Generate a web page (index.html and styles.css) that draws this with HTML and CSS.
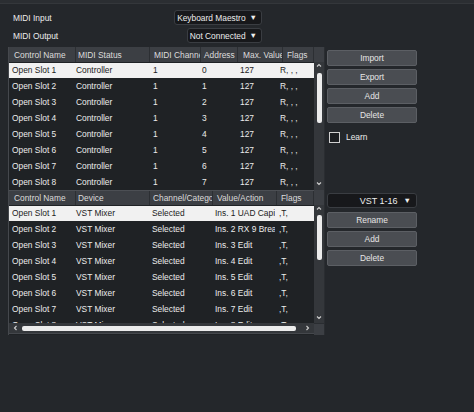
FILE: index.html
```html
<html>
	<head>
		<title>Generic Remote</title>
		<meta name="viewport" content="width=device-width, initial-scale=1.0">
		<link rel="stylesheet" href="styles.css">
	</head>
	<body>
		<div class="topbar"></div>
		<div class="io">
			<div class="io-row">
				<span>MIDI Input</span>
				<div class="select sel-input">Keyboard Maestro <span class="caret">▼</span></div>
			</div>
			<div class="io-row">
				<span>MIDI Output</span>
				<div class="select sel-output">Not Connected <span class="caret">▼</span></div>
			</div>
		</div>

		<div class="section">
			<div class="frame">
				<div class="list">
					<div class="thead t1">
						<div>Control Name</div><div>MIDI Status</div><div>MIDI Channel</div><div>Address</div><div>Max. Value</div><div>Flags</div>
					</div>
					<div class="tbody">
						<div class="row t1 selected"><div>Open Slot 1</div><div>Controller</div><div>1</div><div>0</div><div>127</div><div>R, , ,</div></div>
						<div class="row t1"><div>Open Slot 2</div><div>Controller</div><div>1</div><div>1</div><div>127</div><div>R, , ,</div></div>
						<div class="row t1"><div>Open Slot 3</div><div>Controller</div><div>1</div><div>2</div><div>127</div><div>R, , ,</div></div>
						<div class="row t1"><div>Open Slot 4</div><div>Controller</div><div>1</div><div>3</div><div>127</div><div>R, , ,</div></div>
						<div class="row t1"><div>Open Slot 5</div><div>Controller</div><div>1</div><div>4</div><div>127</div><div>R, , ,</div></div>
						<div class="row t1"><div>Open Slot 6</div><div>Controller</div><div>1</div><div>5</div><div>127</div><div>R, , ,</div></div>
						<div class="row t1"><div>Open Slot 7</div><div>Controller</div><div>1</div><div>6</div><div>127</div><div>R, , ,</div></div>
						<div class="row t1"><div>Open Slot 8</div><div>Controller</div><div>1</div><div>7</div><div>127</div><div>R, , ,</div></div>
					</div>
				</div>
				<div class="vscroll">
					<div class="vhead"></div>
					<div class="vtrack track1">
						<svg class="arrow" width="6" height="7" viewBox="0 0 6 7"><polyline points="1,4.5 3,2.5 5,4.5" /></svg>
						<div class="thumb thumb1"></div>
						<div class="spacer"></div>
						<svg class="arrow" width="6" height="7" viewBox="0 0 6 7"><polyline points="1,2.5 3,4.5 5,2.5" /></svg>
					</div>
				</div>
			</div>
			<div class="side">
				<div class="btn">Import</div>
				<div class="btn">Export</div>
				<div class="btn">Add</div>
				<div class="btn">Delete</div>
				<div class="learn"><span class="check"></span>Learn</div>
			</div>
		</div>

		<div class="section">
			<div class="frame frame2">
				<div class="list">
					<div class="thead t2">
						<div>Control Name</div><div>Device</div><div>Channel/Category</div><div>Value/Action</div><div>Flags</div>
					</div>
					<div class="tbody body2">
						<div class="row t2 selected"><div>Open Slot 1</div><div>VST Mixer</div><div>Selected</div><div>Ins. 1 UAD Capitol Chambers</div><div>,T,</div></div>
						<div class="row t2"><div>Open Slot 2</div><div>VST Mixer</div><div>Selected</div><div>Ins. 2 RX 9 Breath Control</div><div>,T,</div></div>
						<div class="row t2"><div>Open Slot 3</div><div>VST Mixer</div><div>Selected</div><div>Ins. 3 Edit</div><div>,T,</div></div>
						<div class="row t2"><div>Open Slot 4</div><div>VST Mixer</div><div>Selected</div><div>Ins. 4 Edit</div><div>,T,</div></div>
						<div class="row t2"><div>Open Slot 5</div><div>VST Mixer</div><div>Selected</div><div>Ins. 5 Edit</div><div>,T,</div></div>
						<div class="row t2"><div>Open Slot 6</div><div>VST Mixer</div><div>Selected</div><div>Ins. 6 Edit</div><div>,T,</div></div>
						<div class="row t2"><div>Open Slot 7</div><div>VST Mixer</div><div>Selected</div><div>Ins. 7 Edit</div><div>,T,</div></div>
						<div class="row t2"><div>Open Slot 8</div><div>VST Mixer</div><div>Selected</div><div>Ins. 8 Edit</div><div>,T,</div></div>
					</div>
					<div class="hscroll">
						<svg class="arrow" width="7" height="6" viewBox="0 0 7 6"><polyline points="4.5,1 2.5,3 4.5,5" /></svg>
						<div class="hthumb"></div>
						<div class="spacer"></div>
						<svg class="arrow" width="7" height="6" viewBox="0 0 7 6"><polyline points="2.5,1 4.5,3 2.5,5" /></svg>
					</div>
				</div>
				<div class="vscroll">
					<div class="vhead"></div>
					<div class="vtrack track2">
						<svg class="arrow" width="6" height="7" viewBox="0 0 6 7"><polyline points="1,4.5 3,2.5 5,4.5" /></svg>
						<div class="thumb thumb2"></div>
						<div class="spacer"></div>
						<svg class="arrow" width="6" height="7" viewBox="0 0 6 7"><polyline points="1,2.5 3,4.5 5,2.5" /></svg>
					</div>
					<div class="corner"></div>
				</div>
			</div>
			<div class="side">
				<div class="select sel-bank">VST 1-16 <span class="caret">▼</span></div>
				<div class="btn">Rename</div>
				<div class="btn">Add</div>
				<div class="btn">Delete</div>
			</div>
		</div>
	</body>
</html>
```

FILE: styles.css
```css
body {
	margin: 0;
	background-color: #24272b;
	color: #ececec;
	font-family: "Liberation Sans", Arial, sans-serif;
	font-size: 8.4px;
	width: 474px;
	height: 412px;
	overflow: hidden;
}
.topbar {
	height: 3px;
	background: #2b2e32;
	border-bottom: 1px solid #34373b;
}
.io {
	margin-top: 6px;
	padding-left: 13px;
	width: 249px;
	display: flex;
	flex-direction: column;
	gap: 3px;
}
.io-row {
	display: flex;
	justify-content: space-between;
	align-items: center;
	height: 15px;
}
.select {
	box-sizing: border-box;
	height: 15px;
	background: #17181b;
	border: 1px solid #3a3d42;
	border-radius: 3px;
	display: flex;
	align-items: center;
	justify-content: flex-end;
	gap: 4px;
	padding: 0 4px;
	white-space: nowrap;
}
.caret {
	font-size: 7.5px;
	color: #f0f0f0;
}
.sel-input {
	width: 88px;
}
.sel-output {
	width: 75px;
}
.section {
	display: flex;
	align-items: flex-start;
	padding-left: 8px;
}
.io + .section {
	margin-top: 4px;
}
.frame {
	display: flex;
	width: 317px;
}
.list {
	box-sizing: border-box;
	width: 307px;
	background: #1f2225;
	border-left: 1px solid #45484d;
}
.thead {
	box-sizing: border-box;
	height: 15px;
	display: flex;
	background: #3c3f44;
	color: #dcdcdc;
}
.frame2 .thead {
	border-top: 1px solid #4c4f54;
}
.thead > div {
	box-sizing: border-box;
	height: 100%;
	display: flex;
	align-items: center;
	white-space: nowrap;
	overflow: hidden;
	border-right: 1px solid #2c2f33;
}
.thead.t1 > div:nth-child(1) { width: 67px; padding-left: 5px; }
.thead.t1 > div:nth-child(2) { width: 74px; padding-left: 2px; }
.thead.t1 > div:nth-child(3) { width: 51px; padding-left: 4px; }
.thead.t1 > div:nth-child(4) { width: 37px; padding-left: 3px; }
.thead.t1 > div:nth-child(5) { width: 45px; padding-left: 5px; }
.thead.t1 > div:nth-child(6) { flex: 1; padding-left: 4px; }
.thead.t2 > div:nth-child(1) { width: 67px; padding-left: 5px; }
.thead.t2 > div:nth-child(2) { width: 74px; padding-left: 2px; }
.thead.t2 > div:nth-child(3) { width: 63px; padding-left: 3px; }
.thead.t2 > div:nth-child(4) { width: 64px; padding-left: 4px; }
.thead.t2 > div:nth-child(5) { flex: 1; padding-left: 4px; }
.tbody {
	overflow: hidden;
}
.body2 {
	height: 118px;
}
.row {
	height: 16px;
	display: flex;
	align-items: center;
}
.row > div {
	box-sizing: border-box;
	padding-left: 4px;
	white-space: nowrap;
	overflow: hidden;
}
.row.selected {
	background: #f1f1f1;
	color: #1b1b1b;
	box-shadow: inset 0 1px 0 #1f2225;
}
.row.t1 > div:nth-child(1) { width: 63px; padding-left: 3px; }
.row.t1 > div:nth-child(2) { width: 77px; }
.row.t1 > div:nth-child(3) { width: 49px; }
.row.t1 > div:nth-child(4) { width: 38px; }
.row.t1 > div:nth-child(5) { width: 40px; }
.row.t1 > div:nth-child(6) { flex: 1; }
.row.t2 > div:nth-child(1) { width: 63px; padding-left: 3px; }
.row.t2 > div:nth-child(2) { width: 76px; }
.row.t2 > div:nth-child(3) { width: 63px; }
.row.t2 > div:nth-child(4) { width: 64px; padding-right: 2px; }
.row.t2 > div:nth-child(5) { flex: 1; }
.vscroll {
	width: 10px;
	display: flex;
	flex-direction: column;
	background: #34373b;
	border-right: 1px solid #2a2d31;
}
.vhead {
	height: 15px;
	background: #3c3f44;
}
.vtrack {
	display: flex;
	flex-direction: column;
	align-items: center;
}
.track1 {
	height: 128px;
	padding-bottom: 3px;
	box-sizing: border-box;
}
.track2 {
	height: 118px;
	padding-bottom: 2px;
	box-sizing: border-box;
}
.arrow {
	flex: none;
}
.arrow polyline {
	fill: none;
	stroke: #cfcfcf;
	stroke-width: 1.1;
}
.thumb {
	width: 5px;
	background: #ececec;
	border-radius: 2px;
	margin-top: 4px;
}
.thumb1 {
	height: 50px;
}
.thumb2 {
	height: 45px;
	margin-top: 3px;
}
.spacer {
	flex: 1;
}
.corner {
	height: 11px;
	background: #3c3f44;
	border-top: 1px solid #2a2d31;
}
.hscroll {
	height: 10px;
	background: #34373b;
	display: flex;
	align-items: center;
	padding: 0 3px;
	border-bottom: 1px solid #45484d;
}
.hthumb {
	width: 274px;
	height: 5px;
	margin-left: 3px;
	background: #ececec;
	border-radius: 2px;
}
.side {
	width: 90px;
	margin-left: 2px;
	margin-top: 3px;
	display: flex;
	flex-direction: column;
	gap: 3px;
}
.btn {
	box-sizing: border-box;
	height: 16px;
	background: #4a4d52;
	border: 1px solid #5c5f64;
	border-radius: 2px;
	color: #e6e6e6;
	display: flex;
	align-items: center;
	justify-content: center;
}
.sel-bank {
	width: 90px;
	margin-bottom: 1px;
	padding-right: 5px;
	gap: 6px;
	font-size: 9px;
}
.learn {
	display: flex;
	align-items: center;
	margin-top: 3px;
	height: 16px;
}
.check {
	box-sizing: border-box;
	width: 11px;
	height: 11px;
	margin-left: 2px;
	margin-right: 6px;
	border: 1px solid #d0d0d0;
	background: #1c1e21;
}
```
